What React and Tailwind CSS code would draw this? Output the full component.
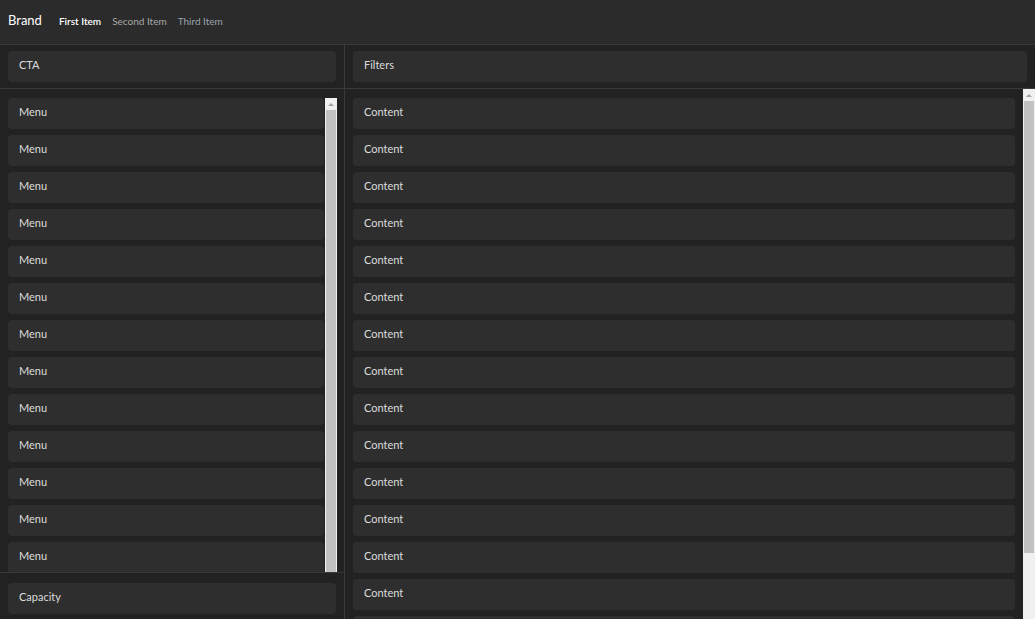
const menus = Array.from({ length: 13 }, (_, i) => i)
const contents = Array.from({ length: 17 }, (_, i) => i)

function Card({ children }) {
  return (
    <div className="flex h-[31px] shrink-0 items-center rounded bg-[#2e2e2e] px-[11px] pb-[2px] text-[11px] text-[#dcdcdc]">
      {children}
    </div>
  )
}

// the headless screenshot hides native scrollbars, so draw a classic light one
function ScrollBar({ thumb }) {
  return (
    <div className="flex w-[12px] shrink-0 flex-col bg-[#f1f1f1]">
      <div className="flex h-[12px] shrink-0 items-center justify-center">
        <div className="h-0 w-0 border-x-[3px] border-b-[3px] border-x-transparent border-b-[#a3a3a3]" />
      </div>
      <div className={`mx-px shrink-0 bg-[#c1c1c1] ${thumb}`} />
    </div>
  )
}

export default function App() {
  return (
    <div className="h-screen overflow-hidden bg-[#222222] font-['Lato','Open_Sans',sans-serif]">
      <div className="flex h-[638px] flex-col">
        <header className="flex h-[45px] shrink-0 items-center border-b border-[#3a3a3a] bg-[#2b2b2b] px-2 pb-[2px]">
          <span className="mr-[17px] text-[13px] text-white">Brand</span>
          <nav className="flex items-center gap-[11px] text-[10px]">
            <a className="font-semibold text-white">First Item</a>
            <a className="text-[#a8a8a8]">Second Item</a>
            <a className="text-[#9aa1ad]">Third Item</a>
          </nav>
        </header>

        <div className="flex min-h-0 flex-1">
          <aside className="flex w-[345px] shrink-0 flex-col border-r border-[#3a3a3a]">
            <div className="shrink-0 border-b border-[#3a3a3a] px-2 py-[6px]">
              <Card>CTA</Card>
            </div>
            <div className="mt-[9px] mr-[7px] ml-2 flex h-[474px] shrink-0 gap-px">
              <div className="flex min-w-0 flex-1 flex-col gap-[6px] overflow-hidden">
                {menus.map((i) => (
                  <Card key={i}>Menu</Card>
                ))}
              </div>
              <ScrollBar thumb="flex-1" />
            </div>
            <div className="shrink-0 border-t border-[#3a3a3a] px-2 pt-[10px]">
              <Card>Capacity</Card>
            </div>
          </aside>

          <main className="flex min-w-0 flex-1 flex-col">
            <div className="shrink-0 border-b border-[#3a3a3a] px-2 py-[6px]">
              <Card>Filters</Card>
            </div>
            <div className="flex min-h-0 flex-1">
              <div className="flex min-w-0 flex-1 flex-col gap-[6px] overflow-hidden px-2 pt-[9px]">
                {contents.map((i) => (
                  <Card key={i}>Content</Card>
                ))}
              </div>
              <ScrollBar thumb="h-[452px]" />
            </div>
          </main>
        </div>
      </div>
    </div>
  )
}
